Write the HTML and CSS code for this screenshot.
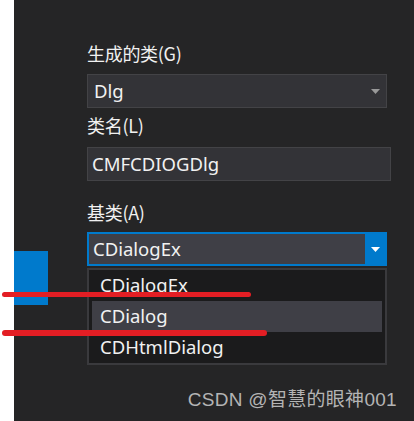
FILE: index.html
```html
<!DOCTYPE html>
<html>
<head>
<meta charset="utf-8">
<link rel="stylesheet" href="styles.css">
</head>
<body>
<div class="page">
  <div class="strip"></div>
  <div class="panel">
    <div class="side">
      <div class="tab"></div>
    </div>
    <div class="form">
      <div class="label">生成的类(G)</div>
      <div class="select">
        <span class="value">Dlg</span>
        <svg class="arrow" width="9" height="5" viewBox="0 0 9 5"><path d="M0 0H9L4.5 5Z" fill="#999999"/></svg>
      </div>
      <div class="label label-mid">类名(L)</div>
      <div class="textbox">CMFCDIOGDlg</div>
      <div class="label label-base">基类(A)</div>
      <div class="combo">
        <span class="combo-value">CDialogEx</span>
        <span class="combo-btn"><svg width="9" height="5" viewBox="0 0 9 5"><path d="M0 0H9L4.5 5Z" fill="#ffffff"/></svg></span>
      </div>
      <div class="list">
        <div class="item">CDialogEx</div>
        <div class="item item-active">CDialog</div>
        <div class="item">CDHtmlDialog</div>
      </div>
    </div>
    <div class="mark mark-1"></div>
    <div class="mark mark-2"></div>
    <div class="watermark">CSDN @智慧的眼神001</div>
  </div>
</div>
</body>
</html>
```

FILE: styles.css
```css
html, body {
  margin: 0;
  padding: 0;
  background: #ffffff;
}
.page {
  width: 414px;
  height: 421px;
  display: flex;
  overflow: hidden;
}
.strip {
  width: 14px;
  flex: none;
  background: #ffffff;
}
.panel {
  flex: 1;
  position: relative;
  background: #252526;
  display: flex;
  font-family: "Noto Sans", "Noto Sans CJK SC", sans-serif;
  color: #f1f1f1;
}
.side {
  width: 73px;
  flex: none;
  padding-top: 251px;
  box-sizing: border-box;
}
.tab {
  width: 34px;
  height: 54px;
  background: #007acc;
}
.form {
  width: 304px;
  padding-top: 41px;
  display: flex;
  flex-direction: column;
}
.label {
  font-family: "Noto Sans CJK SC", sans-serif;
  font-size: 18px;
  line-height: 24px;
  height: 24px;
  margin-bottom: 9px;
  letter-spacing: -0.3px;
}
.label-mid {
  margin-top: 5px;
  margin-bottom: 10px;
}
.label-base {
  margin-top: 19px;
  margin-bottom: 8px;
}
.select {
  width: 300px;
  height: 34px;
  box-sizing: border-box;
  border: 1px solid #434346;
  background: #333337;
  display: flex;
  align-items: center;
  justify-content: space-between;
  padding: 0 6px 0 6px;
}
.value, .combo-value, .textbox, .item {
  font-size: 18.5px;
}
.value {
  line-height: 24px;
}
.arrow {
  display: block;
}
.textbox {
  width: 304px;
  height: 34px;
  box-sizing: border-box;
  border: 1px solid #434346;
  background: #333337;
  padding: 0 4px;
  line-height: 31px;
}
.combo {
  width: 300px;
  height: 34px;
  box-sizing: border-box;
  border: 2px solid #007acc;
  background: #3f3f46;
  display: flex;
  align-items: center;
  margin-bottom: 2px;
}
.combo-value {
  flex: 1;
  padding-left: 4px;
  line-height: 24px;
}
.combo-btn {
  width: 20px;
  height: 100%;
  background: #007acc;
  display: flex;
  align-items: center;
  justify-content: center;
}
.list {
  width: 300px;
  box-sizing: border-box;
  border: 2px solid #3a3a3d;
  background: #1b1b1c;
  padding: 0 3px;
}
.item {
  height: 31px;
  line-height: 29px;
  padding-left: 8px;
}
.item-active {
  background: #3f3f46;
}
.mark {
  position: absolute;
  height: 5px;
  border-radius: 3px;
  background: #e31e24;
}
.mark-1 {
  left: -12px;
  top: 292px;
  width: 249px;
}
.mark-2 {
  left: -12px;
  top: 330px;
  width: 265px;
  height: 6px;
}
.watermark {
  position: absolute;
  right: 17px;
  top: 389px;
  font-family: "Liberation Sans", "Noto Sans CJK SC", sans-serif;
  font-size: 19px;
  line-height: 22px;
  color: #b4b4b4;
  letter-spacing: 0.3px;
}
```
